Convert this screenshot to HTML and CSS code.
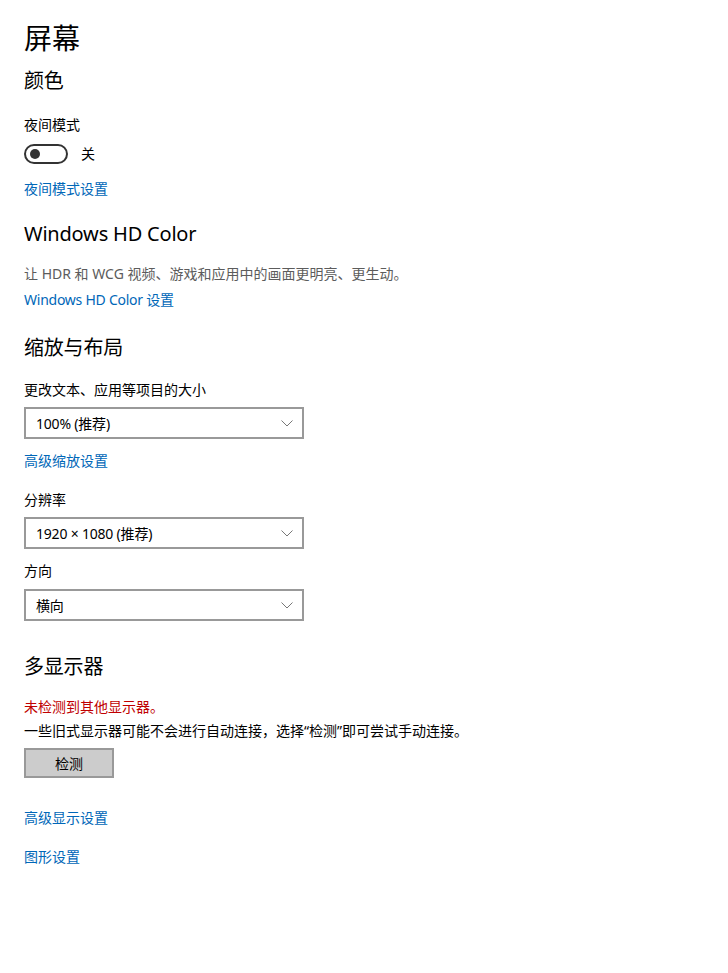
FILE: index.html
```html
<!DOCTYPE html>
<html lang="zh-CN">
<head>
<meta charset="utf-8">
<title>屏幕</title>
<link rel="stylesheet" href="styles.css">
</head>
<body>
<main class="page">
  <h1 class="title">屏幕</h1>
  <h2 class="section h-color">颜色</h2>
  <div class="label l-night">夜间模式</div>
  <div class="toggle-row">
    <span class="toggle"><span class="knob"></span></span>
    <span class="toggle-text">关</span>
  </div>
  <a class="link l-nightset" href="#">夜间模式设置</a>

  <h2 class="section h-hd">Windows HD Color</h2>
  <div class="desc">让 HDR 和 WCG 视频、游戏和应用中的画面更明亮、更生动。</div>
  <a class="link l-hdset" href="#">Windows HD Color 设置</a>

  <h2 class="section h-scale">缩放与布局</h2>
  <div class="label l-size">更改文本、应用等项目的大小</div>
  <div class="select s-first">
    <span>100% (推荐)</span>
    <svg class="chev" width="12" height="7" viewBox="0 0 12 7"><path d="M0.5 0.5 L6 6 L11.5 0.5" fill="none" stroke="#777" stroke-width="1"/></svg>
  </div>
  <a class="link l-adv" href="#">高级缩放设置</a>

  <div class="label l-res">分辨率</div>
  <div class="select s-next">
    <span>1920 × 1080 (推荐)</span>
    <svg class="chev" width="12" height="7" viewBox="0 0 12 7"><path d="M0.5 0.5 L6 6 L11.5 0.5" fill="none" stroke="#777" stroke-width="1"/></svg>
  </div>
  <div class="label l-dir">方向</div>
  <div class="select s-next2">
    <span>横向</span>
    <svg class="chev" width="12" height="7" viewBox="0 0 12 7"><path d="M0.5 0.5 L6 6 L11.5 0.5" fill="none" stroke="#777" stroke-width="1"/></svg>
  </div>

  <h2 class="section h-multi">多显示器</h2>
  <div class="error">未检测到其他显示器。</div>
  <div class="text">一些旧式显示器可能不会进行自动连接，选择“检测”即可尝试手动连接。</div>
  <button class="btn" type="button">检测</button>
  <a class="link l-advdisp" href="#">高级显示设置</a>
  <a class="link l-gfx" href="#">图形设置</a>
</main>
</body>
</html>
```

FILE: styles.css
```css
* { box-sizing: border-box; }
html, body { margin: 0; padding: 0; background: #fff; }
body {
  font-family: "Noto Sans", "Noto Sans CJK SC", sans-serif;
  color: #000;
  font-size: 14px;
}
.page {
  display: flex;
  flex-direction: column;
  align-items: flex-start;
  padding: 18px 24px 40px;
}
.title {
  margin: 0;
  font-size: 28px;
  line-height: 40px;
  font-weight: 400;
}
.section {
  margin: 0;
  font-size: 20px;
  line-height: 28px;
  font-weight: 400;
  letter-spacing: -0.2px;
}
.label, .desc, .error, .text, .link {
  font-size: 14px;
  line-height: 20px;
}
.link { color: #0067b8; text-decoration: none; }
.l-hdset { letter-spacing: -0.25px; }
.desc { color: #5c5c5c; }
.error { color: #c00000; }

.h-color { margin-top: 9px; }
.l-night { margin-top: 20px; }
.toggle-row { margin-top: 9px; display: flex; align-items: center; gap: 13px; height: 20px; }
.toggle {
  width: 44px; height: 20px;
  border: 2px solid #333;
  border-radius: 10px;
  display: flex; align-items: center;
  padding-left: 4px;
}
.knob { width: 10px; height: 10px; border-radius: 50%; background: #333; }
.toggle-text { font-size: 14px; line-height: 20px; }
.l-nightset { margin-top: 15px; }

.h-hd { margin-top: 21px; }
.desc { margin-top: 16px; }
.l-hdset { margin-top: 6px; }

.h-scale { margin-top: 24px; }
.l-size { margin-top: 18px; }
.select {
  width: 280px; height: 32px;
  border: 2px solid #999;
  display: flex; align-items: center; justify-content: space-between;
  padding: 0 9px 0 10px;
  font-size: 14px;
  letter-spacing: -0.2px;
}
.s-first { margin-top: 7px; }
.l-adv { margin-top: 12px; }
.l-res { margin-top: 19px; }
.s-next { margin-top: 7px; }
.l-dir { margin-top: 12px; }
.s-next2 { margin-top: 8px; }

.h-multi { margin-top: 32px; }
.error { margin-top: 16px; }
.text { margin-top: 4px; }
.btn {
  margin-top: 7px;
  width: 90px; height: 30px;
  background: #ccc;
  border: 2px solid #999;
  font-family: inherit;
  font-size: 14px;
  color: #000;
  padding: 0;
}
.l-advdisp { margin-top: 30px; }
.l-gfx { margin-top: 19px; }
```
